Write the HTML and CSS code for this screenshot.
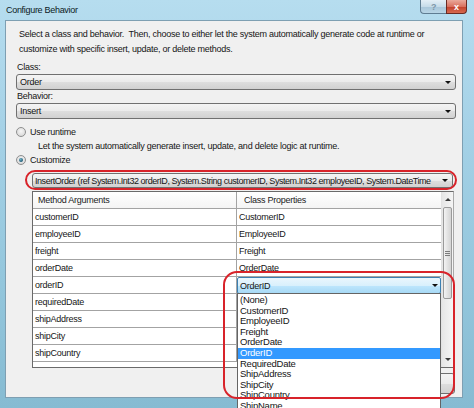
FILE: index.html
```html
<!DOCTYPE html>
<html>
<head>
<meta charset="UTF-8">
<title>Configure Behavior</title>
<link rel="stylesheet" href="styles.css">
</head>
<body>

<div class="window">
	<div class="titlebar">
		<span class="title">Configure Behavior</span>
		<div class="caption">
			<span class="cap_help">?</span>
			<span class="cap_close">x</span>
		</div>
	</div>

	<div class="client">
		<p class="intro">Select a class and behavior.&nbsp; Then, choose to either let the system automatically generate code at runtime or<br>customize with specific insert, update, or delete methods.</p>

		<div class="label">Class:</div>
		<div class="combo"><span>Order</span><span class="arrow"></span></div>

		<div class="label">Behavior:</div>
		<div class="combo"><span>Insert</span><span class="arrow"></span></div>

		<div class="radio_row first"><span class="radio"></span>Use runtime</div>
		<div class="hint">Let the system automatically generate insert, update, and delete logic at runtime.</div>
		<div class="radio_row"><span class="radio checked"></span>Customize</div>

		<div class="custom">
			<div class="combo method"><span class="method_text">InsertOrder (ref System.Int32 orderID, System.String customerID, System.Int32 employeeID, System.DateTime</span><span class="arrow"></span></div>

			<div class="grid">
				<div class="grid_body">
					<div class="cell head first">Method Arguments</div>
					<div class="cell head">Class Properties</div>

					<div class="cell first">customerID</div>
					<div class="cell">CustomerID</div>
					<div class="cell first">employeeID</div>
					<div class="cell">EmployeeID</div>
					<div class="cell first">freight</div>
					<div class="cell">Freight</div>
					<div class="cell first">orderDate</div>
					<div class="cell">OrderDate</div>
					<div class="cell first">orderID</div>
					<div class="cell edit"><div class="combo active"><span>OrderID</span><span class="arrow"></span></div></div>
					<div class="cell first">requiredDate</div>
					<div class="cell"></div>
					<div class="cell first">shipAddress</div>
					<div class="cell"></div>
					<div class="cell first">shipCity</div>
					<div class="cell"></div>
					<div class="cell first">shipCountry</div>
					<div class="cell"></div>
				</div>
				<div class="vscroll">
					<div class="sb_btn"><span class="up"></span></div>
					<div class="sb_thumb"><span class="grip"></span></div>
					<div class="sb_track"></div>
					<div class="sb_btn"><span class="down"></span></div>
				</div>
			</div>
		</div>

		<div class="buttons">
			<button class="btn">OK</button>
			<button class="btn">Cancel</button>
		</div>
	</div>

	<!-- open dropdown of the OrderID cell -->
	<ul class="dropdown">
		<li>(None)</li>
		<li>CustomerID</li>
		<li>EmployeeID</li>
		<li>Freight</li>
		<li>OrderDate</li>
		<li class="selected">OrderID</li>
		<li>RequiredDate</li>
		<li>ShipAddress</li>
		<li>ShipCity</li>
		<li>ShipCountry</li>
		<li>ShipName</li>
	</ul>

	<!-- red annotation marks -->
	<div class="mark mark_method"></div>
	<div class="mark mark_prop"></div>
</div>

</body>
</html>
```

FILE: styles.css
```css
* {
	box-sizing: border-box;
}
body {
	margin: 0;
	font-family: "Liberation Sans", Arial, sans-serif;
	font-size: 9px;
	letter-spacing: -0.25px;
	color: #151515;
}
.window {
	position: relative;
	width: 474px;
	height: 408px;
	overflow: hidden;
	background: linear-gradient(180deg, #b6ddef 0%, #a6d2e7 30%, #93c6dc 70%, #86bbd2 100%);
}
.titlebar {
	display: flex;
	height: 20px;
}
.title {
	padding: 5px 0 0 6px;
	line-height: 10px;
	letter-spacing: -0.3px;
	color: #0c1a24;
}
.caption {
	display: flex;
	margin-left: auto;
	margin-right: 7px;
	height: 14px;
}
.cap_help, .cap_close {
	display: flex;
	align-items: center;
	justify-content: center;
	height: 14px;
	font-weight: bold;
	font-size: 9px;
	color: #ffffff;
	border: 1px solid #5f7d92;
	border-top: none;
}
.cap_help {
	width: 26px;
	border-right: none;
	border-radius: 0 0 0 4px;
	background: linear-gradient(180deg, #e4eff6 0%, #c7dce9 50%, #a9c6d9 51%, #b9d6e6 100%);
	color: #7d97a8;
}
.cap_close {
	width: 21px;
	border-color: #6a2a22;
	border-radius: 0 0 4px 0;
	background: linear-gradient(180deg, #eaa99b 0%, #d9715f 50%, #c2402b 51%, #d6694e 100%);
}
.client {
	display: flex;
	flex-direction: column;
	height: 378px;
	margin: 0 11px 0 5px;
	padding: 0 6px 0 10px;
	background-color: #f0f0f0;
	border: 1px solid #7e9fb2;
}
.intro {
	margin: 6px 0 0 3px;
	line-height: 15px;
}
.label {
	margin: 4px 0 0 1px;
	line-height: 13px;
}
.label + .combo + .label {
	margin-top: 0;
}
.combo {
	display: flex;
	align-items: center;
	height: 16px;
	padding-left: 3px;
	border: 1px solid #707070;
	border-radius: 3px;
	background: linear-gradient(180deg, #f4f4f4 0%, #ebebeb 50%, #dedede 51%, #d1d1d1 100%);
	white-space: nowrap;
	overflow: hidden;
}
.combo .arrow {
	flex: none;
	margin-left: auto;
	margin-right: 4px;
	border-left: 3px solid transparent;
	border-right: 3px solid transparent;
	border-top: 3px solid #111111;
}
.radio_row {
	display: flex;
	align-items: center;
	height: 14px;
}
.radio_row.first {
	margin-top: 6px;
}
.radio {
	display: flex;
	align-items: center;
	justify-content: center;
	width: 10px;
	height: 10px;
	margin-right: 4px;
	border: 1px solid #8e8f8f;
	border-radius: 50%;
	background: radial-gradient(circle at 50% 40%, #f6f6f6 0%, #dcdcdc 70%, #cacaca 100%);
}
.radio.checked::after {
	content: "";
	width: 4px;
	height: 4px;
	border-radius: 50%;
	background: radial-gradient(circle at 40% 35%, #6fb3c9 0%, #1f5a74 70%);
}
.hint {
	padding-left: 22px;
	line-height: 14px;
}
.custom {
	margin: 0 2px 0 16px;
}
.combo.method {
	height: 15px;
	margin: 6px 1px 0 0;
	padding-left: 2px;
}
.method_text {
	letter-spacing: -0.45px;
}
.grid {
	display: flex;
	height: 177px;
	margin-top: 3px;
	border: 1px solid #6a6a6a;
	border-right-color: #a9a9a9;
	background-color: #ffffff;
}
.grid_body {
	display: grid;
	grid-template-columns: 204px 204px;
	grid-auto-rows: 17px;
}
.cell {
	padding-left: 2px;
	line-height: 16px;
	border-bottom: 1px solid #a3a3a3;
	white-space: nowrap;
}
.cell.first {
	border-right: 1px solid #a3a3a3;
}
.cell.head {
	padding-left: 7px;
	background: linear-gradient(180deg, #ffffff 0%, #f4f4f4 100%);
	color: #222222;
}
.cell.head.first {
	padding-left: 5px;
}
.cell.edit {
	padding: 0;
	border-bottom: none;
}
.combo.active {
	height: 17px;
	padding-left: 2px;
	border-color: #3c7fb1;
	border-radius: 2px;
	background: linear-gradient(180deg, #eaf6fd 0%, #d9f0fc 50%, #bee6fd 51%, #a7d9f5 100%);
}
.combo.active .arrow {
	margin-right: 2px;
}
.vscroll {
	display: flex;
	flex-direction: column;
	width: 12px;
	border-left: 1px solid #e2e2e2;
	background: linear-gradient(90deg, #e6e6e6 0%, #f5f5f5 100%);
}
.sb_btn {
	display: flex;
	align-items: center;
	justify-content: center;
	height: 15px;
}
.up, .down {
	border-left: 3px solid transparent;
	border-right: 3px solid transparent;
}
.up {
	border-bottom: 3px solid #3c3c3c;
}
.down {
	border-top: 3px solid #3c3c3c;
}
.sb_thumb {
	display: flex;
	align-items: center;
	justify-content: center;
	height: 92px;
	margin: 0 1px;
	border: 1px solid #9a9a9a;
	border-radius: 2px;
	background: linear-gradient(90deg, #f3f3f3 0%, #e3e3e3 50%, #d4d4d4 100%);
}
.grip {
	width: 5px;
	height: 5px;
	background: repeating-linear-gradient(180deg, #7c7c7c 0, #7c7c7c 1px, transparent 1px, transparent 2px);
}
.sb_track {
	flex: 1;
}
.buttons {
	display: flex;
	justify-content: flex-end;
	gap: 7px;
	margin: 5px 1px 0 0;
}
.btn {
	width: 74px;
	height: 21px;
	font-family: inherit;
	font-size: 9px;
	border: 1px solid #707070;
	border-radius: 3px;
	background: linear-gradient(180deg, #f4f4f4 0%, #ebebeb 50%, #dedede 51%, #d1d1d1 100%);
}
.dropdown {
	position: absolute;
	left: 237px;
	top: 293px;
	width: 204px;
	height: 130px;
	margin: 0;
	padding: 1px 0 0;
	list-style: none;
	border: 1px solid #646464;
	background-color: #ffffff;
}
.dropdown li {
	height: 10.6px;
	padding-left: 2px;
	line-height: 10.6px;
	font-size: 9.5px;
}
.dropdown li.selected {
	background-color: #3399ff;
	color: #ffffff;
}
.mark {
	position: absolute;
	border: 2px solid #d8232a;
}
.mark_method {
	left: 25px;
	top: 170px;
	width: 432px;
	height: 20px;
	border-radius: 10px;
}
.mark_prop {
	left: 223px;
	top: 271px;
	width: 232px;
	height: 128px;
	border-radius: 14px;
}
```
